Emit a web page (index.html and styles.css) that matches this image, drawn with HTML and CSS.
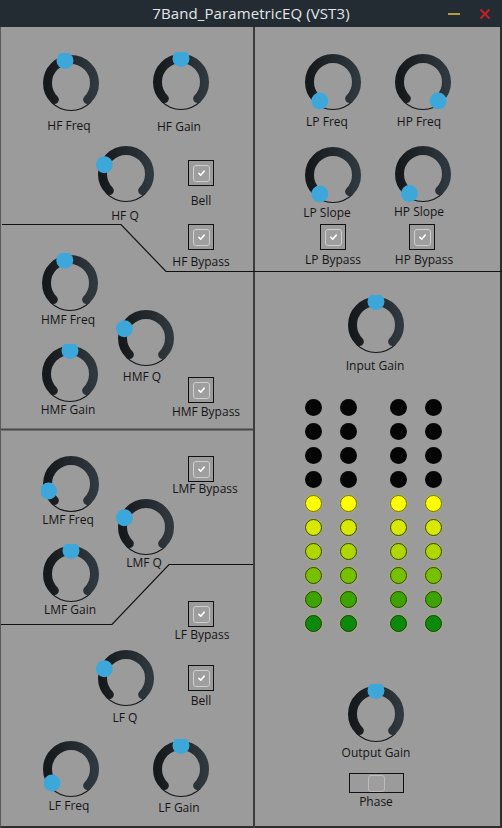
FILE: index.html
```html
<!DOCTYPE html>
<html lang="en">
<head>
  <meta charset="utf-8" />
  <title>7Band_ParametricEQ (VST3)</title>
  <link rel="stylesheet" href="styles.css">
</head>
<body>
  <svg class="defs" width="0" height="0" aria-hidden="true">
    <defs>
      <linearGradient id="ringGrad" x1="0" y1="0" x2="1" y2="0">
        <stop offset="0" stop-color="#16191c"/>
        <stop offset="1" stop-color="#2f383e"/>
      </linearGradient>
      <g id="ring">
        <path d="M10.55 49.45 A27.5 27.5 0 0 0 49.45 49.45" fill="none" stroke="#121416" stroke-width="1.2"/>
        <path d="M13.38 46.62 A23.5 23.5 0 1 1 46.62 46.62" fill="none" stroke="url(#ringGrad)" stroke-width="9" stroke-linecap="round"/>
      </g>
      <g id="tick">
        <path d="M5.2 8.4 L7.2 10.3 L10.9 6" fill="none" stroke="#fff" stroke-width="1.7" stroke-linecap="round" stroke-linejoin="round"/>
      </g>
    </defs>
  </svg>

  <div class="window">
    <div class="titlebar">
      <span class="title">7Band_ParametricEQ (VST3)</span>
      <span class="min"></span>
      <svg class="close" viewBox="0 0 12 12"><path d="M1.5 1.5 L10.5 10.5 M10.5 1.5 L1.5 10.5" stroke="#c41f2b" stroke-width="2"/></svg>
    </div>

    <div class="editor">
      <!-- section borders -->
      <svg class="lines" viewBox="0 0 502 801">
        <line x1="253" y1="0" x2="253" y2="801" stroke="#3b3b3b" stroke-width="2"/>
        <polyline points="1,197.5 120,197.5 165,244.5 501,244.5" fill="none" stroke="#111" stroke-width="1.2"/>
        <line x1="0" y1="402.5" x2="252" y2="402.5" stroke="#474747" stroke-width="2"/>
        <polyline points="0,597.5 111,597.5 168,537.5 252,537.5" fill="none" stroke="#111" stroke-width="1.2"/>
      </svg>

      <!-- HF -->
      <div class="knob hf-freq">
        <svg viewBox="0 0 60 60"><use href="#ring"/><circle class="thumb" cx="24" cy="7.5" r="8.5"/></svg>
        <span class="lbl">HF Freq</span>
      </div>
      <div class="knob hf-gain">
        <svg viewBox="0 0 60 60"><use href="#ring"/><circle class="thumb" cx="30" cy="6.5" r="8.5"/></svg>
        <span class="lbl">HF Gain</span>
      </div>
      <div class="knob hf-q">
        <svg viewBox="0 0 60 60"><use href="#ring"/><circle class="thumb" cx="8.4" cy="20.7" r="8.5"/></svg>
        <span class="lbl">HF Q</span>
      </div>
      <div class="toggle hf-bell">
        <div class="box"><span class="inner"><svg viewBox="0 0 16 16"><use href="#tick"/></svg></span></div>
        <span class="lbl">Bell</span>
      </div>
      <div class="toggle hf-bypass">
        <div class="box"><span class="inner"><svg viewBox="0 0 16 16"><use href="#tick"/></svg></span></div>
        <span class="lbl">HF Bypass</span>
      </div>

      <!-- LP / HP -->
      <div class="knob lp-freq">
        <svg viewBox="0 0 60 60"><use href="#ring"/><circle class="thumb" cx="16.8" cy="49" r="8.5"/></svg>
        <span class="lbl">LP Freq</span>
      </div>
      <div class="knob hp-freq">
        <svg viewBox="0 0 60 60"><use href="#ring"/><circle class="thumb" cx="45.2" cy="49" r="8.5"/></svg>
        <span class="lbl">HP Freq</span>
      </div>
      <div class="knob lp-slope">
        <svg viewBox="0 0 60 60"><use href="#ring"/><circle class="thumb" cx="16.8" cy="49" r="8.5"/></svg>
        <span class="lbl">LP Slope</span>
      </div>
      <div class="knob hp-slope">
        <svg viewBox="0 0 60 60"><use href="#ring"/><circle class="thumb" cx="16.5" cy="49.5" r="8.5"/></svg>
        <span class="lbl">HP Slope</span>
      </div>
      <div class="toggle lp-bypass">
        <div class="box"><span class="inner"><svg viewBox="0 0 16 16"><use href="#tick"/></svg></span></div>
        <span class="lbl">LP Bypass</span>
      </div>
      <div class="toggle hp-bypass">
        <div class="box"><span class="inner"><svg viewBox="0 0 16 16"><use href="#tick"/></svg></span></div>
        <span class="lbl">HP Bypass</span>
      </div>

      <!-- HMF -->
      <div class="knob hmf-freq">
        <svg viewBox="0 0 60 60"><use href="#ring"/><circle class="thumb" cx="24.8" cy="7.2" r="8.5"/></svg>
        <span class="lbl">HMF Freq</span>
      </div>
      <div class="knob hmf-q">
        <svg viewBox="0 0 60 60"><use href="#ring"/><circle class="thumb" cx="8.4" cy="20.7" r="8.5"/></svg>
        <span class="lbl">HMF Q</span>
      </div>
      <div class="knob hmf-gain">
        <svg viewBox="0 0 60 60"><use href="#ring"/><circle class="thumb" cx="30" cy="6.5" r="8.5"/></svg>
        <span class="lbl">HMF Gain</span>
      </div>
      <div class="toggle hmf-bypass">
        <div class="box"><span class="inner"><svg viewBox="0 0 16 16"><use href="#tick"/></svg></span></div>
        <span class="lbl">HMF Bypass</span>
      </div>

      <!-- LMF -->
      <div class="knob lmf-freq">
        <svg viewBox="0 0 60 60"><use href="#ring"/><circle class="thumb" cx="7.6" cy="37" r="8.5"/></svg>
        <span class="lbl">LMF Freq</span>
      </div>
      <div class="knob lmf-q">
        <svg viewBox="0 0 60 60"><use href="#ring"/><circle class="thumb" cx="8.4" cy="20.7" r="8.5"/></svg>
        <span class="lbl">LMF Q</span>
      </div>
      <div class="knob lmf-gain">
        <svg viewBox="0 0 60 60"><use href="#ring"/><circle class="thumb" cx="30" cy="6.5" r="8.5"/></svg>
        <span class="lbl">LMF Gain</span>
      </div>
      <div class="toggle lmf-bypass">
        <div class="box"><span class="inner"><svg viewBox="0 0 16 16"><use href="#tick"/></svg></span></div>
        <span class="lbl">LMF Bypass</span>
      </div>

      <!-- LF -->
      <div class="toggle lf-bypass">
        <div class="box"><span class="inner"><svg viewBox="0 0 16 16"><use href="#tick"/></svg></span></div>
        <span class="lbl">LF Bypass</span>
      </div>
      <div class="knob lf-q">
        <svg viewBox="0 0 60 60"><use href="#ring"/><circle class="thumb" cx="8.4" cy="20.7" r="8.5"/></svg>
        <span class="lbl">LF Q</span>
      </div>
      <div class="toggle lf-bell">
        <div class="box"><span class="inner"><svg viewBox="0 0 16 16"><use href="#tick"/></svg></span></div>
        <span class="lbl">Bell</span>
      </div>
      <div class="knob lf-freq">
        <svg viewBox="0 0 60 60"><use href="#ring"/><circle class="thumb" cx="11" cy="44" r="8.5"/></svg>
        <span class="lbl">LF Freq</span>
      </div>
      <div class="knob lf-gain">
        <svg viewBox="0 0 60 60"><use href="#ring"/><circle class="thumb" cx="30" cy="6.5" r="8.5"/></svg>
        <span class="lbl">LF Gain</span>
      </div>

      <!-- master -->
      <div class="knob in-gain">
        <svg viewBox="0 0 60 60"><use href="#ring"/><circle class="thumb" cx="30" cy="6.5" r="8.5"/></svg>
        <span class="lbl">Input Gain</span>
      </div>

      <div class="meter">
        <div class="channel">
          <i class="led"></i><i class="led"></i>
          <i class="led"></i><i class="led"></i>
          <i class="led"></i><i class="led"></i>
          <i class="led"></i><i class="led"></i>
          <i class="led l5"></i><i class="led l5"></i>
          <i class="led l6"></i><i class="led l6"></i>
          <i class="led l7"></i><i class="led l7"></i>
          <i class="led l8"></i><i class="led l8"></i>
          <i class="led l9"></i><i class="led l9"></i>
          <i class="led l10"></i><i class="led l10"></i>
        </div>
        <div class="channel">
          <i class="led"></i><i class="led"></i>
          <i class="led"></i><i class="led"></i>
          <i class="led"></i><i class="led"></i>
          <i class="led"></i><i class="led"></i>
          <i class="led l5"></i><i class="led l5"></i>
          <i class="led l6"></i><i class="led l6"></i>
          <i class="led l7"></i><i class="led l7"></i>
          <i class="led l8"></i><i class="led l8"></i>
          <i class="led l9"></i><i class="led l9"></i>
          <i class="led l10"></i><i class="led l10"></i>
        </div>
      </div>

      <div class="knob out-gain">
        <svg viewBox="0 0 60 60"><use href="#ring"/><circle class="thumb" cx="30" cy="6.5" r="8.5"/></svg>
        <span class="lbl">Output Gain</span>
      </div>
      <div class="toggle phase">
        <div class="box wide"><span class="inner off"></span></div>
        <span class="lbl">Phase</span>
      </div>
    </div>
  </div>
</body>
</html>
```

FILE: styles.css
```css
:root{
  --panel: #9b9b9b;
  --title: #232c33;
  --ink: #151515;
  --thumb: #3ea7da;
}
html, body{ margin:0; padding:0; }
body{
  width:502px; height:828px; overflow:hidden;
  background: var(--panel);
  font-family: "Open Sans", "DejaVu Sans", sans-serif;
}
.defs{ position:absolute; }

.window{ display:flex; flex-direction:column; height:828px; }

.titlebar{
  height:27px; flex:none; position:relative;
  background: var(--title);
  display:flex; align-items:center; justify-content:center;
}
.title{ color:#e4e6e8; font-size:15px; letter-spacing:.1px; margin-top:-1px; }
.titlebar .min{
  position:absolute; left:448px; top:13px; width:12px; height:2px;
  background:#b39d3e;
}
.titlebar .close{ position:absolute; left:479px; top:8px; width:12px; height:12px; }

.editor{
  position:relative; flex:1;
  border-left:1px solid #5a5a5a;
  border-right:2px solid #2e2e2e;
  border-bottom:2px solid #2e2e2e;
}
.lines{ position:absolute; left:0; top:0; width:502px; height:801px; pointer-events:none; }

/* knobs */
.knob{
  position:absolute; width:90px;
  display:flex; flex-direction:column; align-items:center;
}
.knob svg{ width:60px; height:60px; display:block; }
.thumb{ fill: var(--thumb); }
.lbl{
  font-size:12px; line-height:14px; color: var(--ink); white-space:nowrap;
  margin-top: var(--gap, 0px);
  transform: translateX(var(--shift, 0px));
}

.hf-freq{ left:25px; top:26px; --gap:6px; --shift:-2px; }
.hf-gain{ left:135px; top:25px; --gap:8px; --shift:-2px; }
.hf-q{ left:80px; top:117px; --gap:5px; --shift:-1px; }
.lp-freq{ left:287px; top:25px; --gap:3px; --shift:-6px; }
.hp-freq{ left:377px; top:25px; --gap:3px; --shift:-4px; }
.lp-slope{ left:287px; top:118px; --gap:1px; --shift:-6px; }
.hp-slope{ left:377px; top:117px; --gap:1px; --shift:-4px; }
.hmf-freq{ left:24px; top:226px; --gap:0px; --shift:-2px; }
.hmf-q{ left:100px; top:281px; --gap:2px; --shift:-4px; }
.hmf-gain{ left:24px; top:317px; --gap:-1px; --shift:-2px; }
.lmf-freq{ left:25px; top:427px; --gap:-1px; --shift:-3px; }
.lmf-q{ left:100px; top:470px; --gap:-1px; --shift:-2px; }
.lmf-gain{ left:25px; top:517px; --gap:-1px; --shift:-1px; }
.lf-q{ left:80px; top:621px; --gap:3px; --shift:-1px; }
.lf-freq{ left:25px; top:712px; --gap:0px; --shift:-2px; }
.lf-gain{ left:135px; top:712px; --gap:2px; --shift:-2px; }
.in-gain{ left:330px; top:268px; --gap:4px; --shift:-1px; }
.out-gain{ left:330px; top:657px; --gap:2px; }

/* toggle buttons */
.toggle{
  position:absolute; width:80px;
  display:flex; flex-direction:column; align-items:center;
}
.box{
  width:24px; height:24px; border:1px solid #111;
  display:flex; align-items:center; justify-content:center;
}
.box.wide{ width:53px; height:18px; }
.inner{
  width:15px; height:15px; border:1px solid #cfcfcf; border-radius:3px;
  background: rgba(255,255,255,.04);
  display:flex; align-items:center; justify-content:center;
}
.inner svg{ width:16px; height:16px; display:block; }
.inner.off{ width:15px; height:15px; border-color:#bcbcbc; }

.hf-bell{ left:160px; top:133px; --gap:8px; }
.hf-bypass{ left:160px; top:197px; --gap:5px; }
.lp-bypass{ left:292px; top:197px; --gap:3px; }
.hp-bypass{ left:381px; top:197px; --gap:3px; --shift:2px; }
.hmf-bypass{ left:160px; top:350px; --gap:2px; --shift:5px; }
.lmf-bypass{ left:160px; top:429px; --gap:0px; --shift:4px; }
.lf-bypass{ left:160px; top:574px; --gap:1px; --shift:1px; }
.lf-bell{ left:160px; top:638px; --gap:3px; }
.phase{ left:335px; top:746px; --gap:2px; }

/* level meter */
.meter{
  position:absolute; left:304px; top:372px;
  display:flex; gap:33px;
}
.channel{
  display:grid; grid-template-columns: 17px 17px;
  column-gap:18px; row-gap:7px;
}
.led{
  display:block; width:17px; height:17px; border-radius:50%;
  background:#050505; box-sizing:border-box;
}
.led.l5, .led.l6, .led.l7, .led.l8, .led.l9, .led.l10{
  border:1px solid #37420a;
  box-shadow: 0 0 3px rgba(190,230,0,.45);
}
.led.l5{ background:#ffff05; border-color:#7a7400; }
.led.l6{ background:#d9e800; }
.led.l7{ background:#b0d600; }
.led.l8{ background:#76c000; }
.led.l9{ background:#3ca300; border-color:#25410a; }
.led.l10{ background:#0b8a0b; border-color:#1f3a0f; }
```
